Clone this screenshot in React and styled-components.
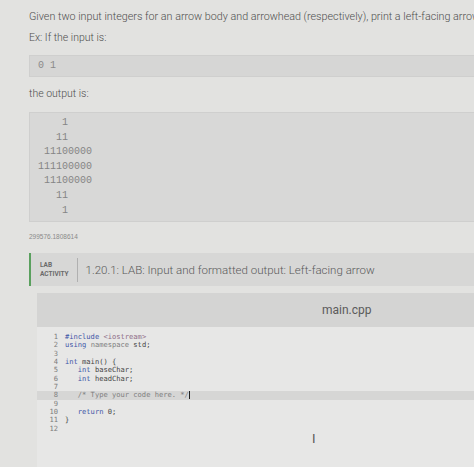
import styled, { createGlobalStyle } from "styled-components"

const Global = createGlobalStyle`
body {
  margin: 0;
  background: #e2e2e0;
  font-family: Roboto, "Liberation Sans", sans-serif;
  overflow: hidden;
}
`

const Page = styled.div`
  width: 474px;
  height: 467px;
  overflow: hidden;
  padding: 10px 0 0 29px;
  box-sizing: border-box;
`

const Para = styled.p`
  margin: 0;
  font-size: ${({size}) => size || 10.5}px;
  font-weight: 300;
  color: #4e4e4e;
  white-space: nowrap;
  line-height: 14px;
  margin-bottom: ${({gap}) => gap}px;
`

const InputBox = styled.pre`
  margin: 0 0 10px;
  height: 22px;
  width: 460px;
  background: #d6d6d5;
  border: 1px solid #cfcfce;
  box-sizing: border-box;
  padding: 0 8px;
  font-family: "Liberation Mono", monospace;
  font-size: 10px;
  line-height: 20px;
  color: #8a8a8a;
`

const OutputBox = styled.pre`
  margin: 0 0 11px;
  height: 110px;
  width: 460px;
  background: #d8d8d7;
  border: 1px solid #cfcfce;
  box-sizing: border-box;
  padding: 3px 8px;
  font-family: "Liberation Mono", monospace;
  font-size: 10px;
  line-height: 14.6px;
  color: #858585;
`

const Tag = styled.div`
  font-size: 6.5px;
  color: #8a8a8a;
  font-family: "Liberation Sans", sans-serif;
  margin-bottom: 13px;
`

const LabHeader = styled.div`
  display: flex;
  align-items: center;
  height: 33px;
  width: 460px;
  background: #d7d7d6;
  border-left: 2px solid #5aa05e;
  box-sizing: border-box;
  padding-left: 9px;
`

const LabLabel = styled.div`
  font-size: 6.5px;
  font-weight: 700;
  line-height: 9px;
  color: #6a6a6a;
  padding-right: 8px;
  border-right: 1px solid #b0b0b0;
  height: 24px;
  display: flex;
  flex-direction: column;
  justify-content: center;
`

const LabTitle = styled.div`
  font-size: 11.5px;
  font-weight: 300;
  color: #5a5a5a;
  padding-left: 8px;
  white-space: nowrap;
`

const Editor = styled.div`
  margin: 7px 0 0 8px;
  width: 460px;
  background: #e7e7e6;
`

const EditorHead = styled.div`
  height: 34px;
  background: #d4d4d3;
  display: flex;
  align-items: center;
  padding-left: 285px;
  font-size: 12px;
  color: #5b5b5b;
`

const Code = styled.div`
  position: relative;
  padding-top: 6px;
  height: 140px;
`

const Row = styled.div`
  display: flex;
  height: 8.35px;
  line-height: 8.35px;
  font-family: "DejaVu Sans Mono", monospace;
  font-size: 7.1px;
  white-space: pre;
  background: ${({active}) => (active ? "#d6d6d5" : "transparent")};
`

const Num = styled.span`
  width: 21px;
  text-align: right;
  color: #7c7c7c;
  padding-right: 7px;
`

const Src = styled.span`
  color: #444;
`

const K = styled.span`
  color: #3f56a6;
`
const S = styled.span`
  color: #8f6e86;
`
const C = styled.span`
  color: #7e7e7e;
`

const Caret = styled.span`
  display: inline-block;
  width: 1px;
  height: 8px;
  background: #222;
  vertical-align: middle;
`

const IBeam = styled.span`
  position: absolute;
  left: 275px;
  top: 105px;
  font-family: "DejaVu Sans", sans-serif;
  font-size: 12px;
  color: #555;
`

const lines = [
  <><K>#include</K> <S>&lt;iostream&gt;</S></>,
  <><K>using</K> <C>namespace</C> std;</>,
  "",
  <><K>int</K> main() {"{"}</>,
  <>   <K>int</K> baseChar;</>,
  <>   <K>int</K> headChar;</>,
  "",
  <>   <C>/* Type your code here. */</C><Caret /></>,
  "",
  <>   <K>return</K> 0;</>,
  "}",
  "",
]

const App = () => {
  return (
    <Page>
      <Global />
      <Para gap={7} size={10.75}>Given two input integers for an arrow body and arrowhead (respectively), print a left-facing arrow.</Para>
      <Para gap={10}>Ex: If the input is:</Para>
      <InputBox>0 1</InputBox>
      <Para gap={11}>the output is:</Para>
      <OutputBox>{`    1
   11
 11100000
111100000
 11100000
   11
    1`}</OutputBox>
      <Tag>299576.1808614</Tag>
      <LabHeader>
        <LabLabel>
          <span>LAB</span>
          <span>ACTIVITY</span>
        </LabLabel>
        <LabTitle>1.20.1: LAB: Input and formatted output: Left-facing arrow</LabTitle>
      </LabHeader>
      <Editor>
        <EditorHead>main.cpp</EditorHead>
        <Code>
          {lines.map((l, i) => (
            <Row key={i} active={i === 7}>
              <Num>{i + 1}</Num>
              <Src>{l}</Src>
            </Row>
          ))}
          <IBeam>I</IBeam>
        </Code>
      </Editor>
    </Page>
  )
}

export default App
